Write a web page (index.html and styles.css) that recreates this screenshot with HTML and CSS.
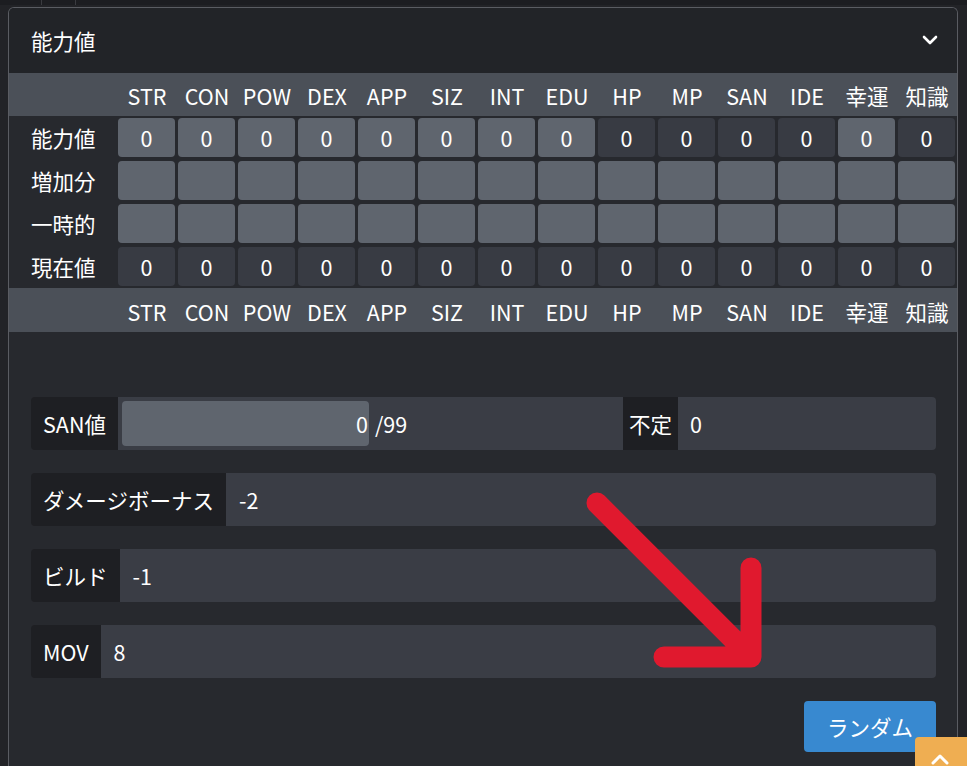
FILE: index.html
```html
<!DOCTYPE html>
<html lang="ja">
<head>
<meta charset="utf-8">
<title>能力値</title>
<link rel="stylesheet" href="styles.css">
</head>
<body>
<div class="topbar"><span class="tb a"></span><span class="tb b"></span></div>
<section class="card">
  <header class="card-header">
    <h2 class="title">能力値</h2>
    <svg class="chev" width="16" height="10" viewBox="0 0 16 10"><polyline points="2,2 8,8 14,2" fill="none" stroke="#fff" stroke-width="2.6" stroke-linecap="round" stroke-linejoin="round"/></svg>
  </header>
  <div class="stats">
    <div class="hd"></div><div class="hd">STR</div><div class="hd">CON</div><div class="hd">POW</div><div class="hd">DEX</div><div class="hd">APP</div><div class="hd">SIZ</div><div class="hd">INT</div><div class="hd">EDU</div><div class="hd">HP</div><div class="hd">MP</div><div class="hd">SAN</div><div class="hd">IDE</div><div class="hd">幸運</div><div class="hd">知識</div>

    <div class="rl">能力値</div>
    <div class="v lt">0</div><div class="v lt">0</div><div class="v lt">0</div><div class="v lt">0</div><div class="v lt">0</div><div class="v lt">0</div><div class="v lt">0</div><div class="v lt">0</div><div class="v dk">0</div><div class="v dk">0</div><div class="v dk">0</div><div class="v dk">0</div><div class="v lt">0</div><div class="v dk">0</div>

    <div class="rl">増加分</div>
    <div class="v lt"></div><div class="v lt"></div><div class="v lt"></div><div class="v lt"></div><div class="v lt"></div><div class="v lt"></div><div class="v lt"></div><div class="v lt"></div><div class="v lt"></div><div class="v lt"></div><div class="v lt"></div><div class="v lt"></div><div class="v lt"></div><div class="v lt"></div>

    <div class="rl">一時的</div>
    <div class="v lt"></div><div class="v lt"></div><div class="v lt"></div><div class="v lt"></div><div class="v lt"></div><div class="v lt"></div><div class="v lt"></div><div class="v lt"></div><div class="v lt"></div><div class="v lt"></div><div class="v lt"></div><div class="v lt"></div><div class="v lt"></div><div class="v lt"></div>

    <div class="rl">現在値</div>
    <div class="v dk">0</div><div class="v dk">0</div><div class="v dk">0</div><div class="v dk">0</div><div class="v dk">0</div><div class="v dk">0</div><div class="v dk">0</div><div class="v dk">0</div><div class="v dk">0</div><div class="v dk">0</div><div class="v dk">0</div><div class="v dk">0</div><div class="v dk">0</div><div class="v dk">0</div>

    <div class="hd ft"></div><div class="hd ft">STR</div><div class="hd ft">CON</div><div class="hd ft">POW</div><div class="hd ft">DEX</div><div class="hd ft">APP</div><div class="hd ft">SIZ</div><div class="hd ft">INT</div><div class="hd ft">EDU</div><div class="hd ft">HP</div><div class="hd ft">MP</div><div class="hd ft">SAN</div><div class="hd ft">IDE</div><div class="hd ft">幸運</div><div class="hd ft">知識</div>
  </div>

  <div class="derived">
    <div class="group">
      <span class="lbl">SAN値</span>
      <div class="field san">
        <div class="bar"><span>0</span></div>
        <span class="max">/99</span>
      </div>
      <span class="lbl narrow">不定</span>
      <div class="field rest">0</div>
    </div>
    <div class="group">
      <span class="lbl">ダメージボーナス</span>
      <div class="field">-2</div>
    </div>
    <div class="group">
      <span class="lbl">ビルド</span>
      <div class="field">-1</div>
    </div>
    <div class="group">
      <span class="lbl">MOV</span>
      <div class="field">8</div>
    </div>
    <button class="btn">ランダム</button>
  </div>
</section>

<svg class="arrow" width="967" height="766" viewBox="0 0 967 766">
  <path d="M597 503 L751 657 M751 568 L751 657 L664 657" fill="none" stroke="#e0192e" stroke-width="21" stroke-linecap="round" stroke-linejoin="round"/>
</svg>

<div class="totop">
  <svg width="20" height="12" viewBox="0 0 20 12"><polyline points="3,10 10,3 17,10" fill="none" stroke="#fff" stroke-width="3" stroke-linecap="round" stroke-linejoin="round"/></svg>
</div>
</body>
</html>
```

FILE: styles.css
```css
* { box-sizing: border-box; }
html, body {
  margin: 0;
  height: 766px;
  overflow: hidden;
}
body {
  position: relative;
  background: #222327;
  font-family: "Noto Sans CJK JP", "Noto Sans", sans-serif;
  color: #fff;
  font-size: 21.5px;
}
.topbar {
  height: 5px;
  background: #1c1d21;
  display: flex;
}
.tb { display: block; height: 5px; border-right: 1px solid #3a3b40; }
.tb.a { width: 42px; }
.tb.b { width: 34px; }

.card {
  margin: 2px 0 0 8px;
  width: 950px;
  height: 820px;
  border: 1px solid #5a5c62;
  border-bottom: 0;
  border-radius: 6px 6px 0 0;
  background: #27292e;
  overflow: hidden;
}
.card-header {
  height: 65px;
  background: #222428;
  display: flex;
  align-items: center;
  justify-content: space-between;
  padding: 0 19px 0 22px;
}
.title {
  margin: 0;
  font-size: 21.5px;
  font-weight: 400;
}
.chev { display: block; margin-top: -2px; }

.stats {
  display: grid;
  grid-template-columns: 108px repeat(14, 60px);
  grid-template-rows: 43px 43px 43px 43px 43px 44px;
}
.hd {
  background: #4b5058;
  display: flex;
  align-items: center;
  justify-content: center;
  padding-top: 1px;
}
.hd.ft { padding-top: 2px; }
.rl {
  display: flex;
  align-items: center;
  padding-left: 22px;
}
.v {
  margin: 2px 2px 2px 1px;
  border-radius: 4px;
  display: flex;
  align-items: center;
  justify-content: center;
}
.v.lt { background: #5f656e; }
.v.dk { background: #383b43; }

.derived {
  display: flex;
  flex-direction: column;
  gap: 23px;
  padding: 65px 21px 0 22px;
}
.group {
  display: flex;
  height: 53px;
  border-radius: 4px;
  overflow: hidden;
}
.lbl {
  background: #1e1f23;
  display: flex;
  align-items: center;
  padding: 0 12px;
  white-space: nowrap;
}
.lbl.narrow { padding: 0 6px; }
.field {
  flex: 1;
  background: #3a3d45;
  display: flex;
  align-items: center;
  padding: 0 13px;
}
.field.san {
  flex: 0 0 505px;
  padding: 4px 0 4px 4px;
  align-items: stretch;
}
.bar {
  width: 247px;
  background: #5f656e;
  border-radius: 4px;
  display: flex;
  align-items: center;
  justify-content: flex-end;
  padding-right: 1px;
}
.max {
  display: flex;
  align-items: center;
  padding-left: 6px;
}
.field.rest { padding-left: 12px; }

.btn {
  align-self: flex-end;
  width: 132px;
  height: 51px;
  border: 0;
  border-radius: 4px;
  background: #3889d0;
  color: #fff;
  font-family: inherit;
  font-size: 21.5px;
  padding: 0;
}

.arrow {
  position: absolute;
  left: 0;
  top: 0;
  pointer-events: none;
}
.totop {
  position: absolute;
  left: 915px;
  top: 737px;
  width: 60px;
  height: 40px;
  background: #efae52;
  border-radius: 4px 0 0 0;
  display: flex;
  justify-content: flex-start;
  padding: 16px 0 0 15px;
}
.totop svg { display: block; }
```
